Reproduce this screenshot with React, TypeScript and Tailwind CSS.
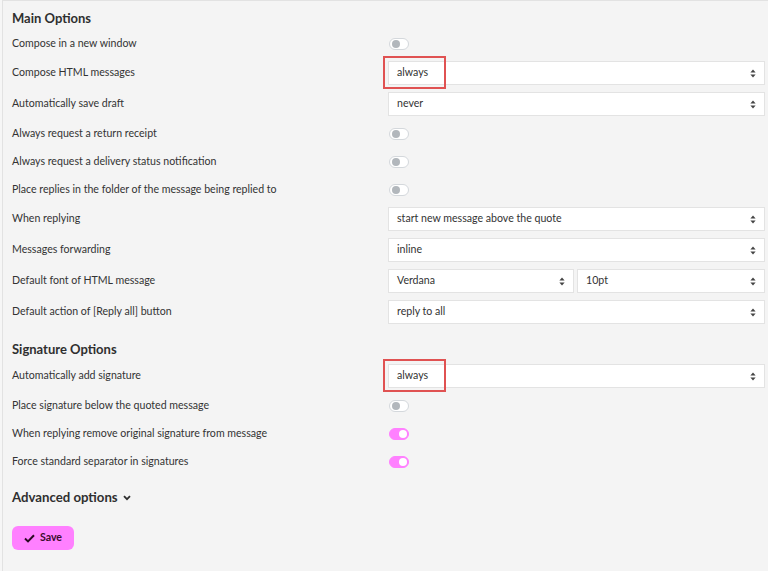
import { ReactNode } from "react";

type Row =
  | { kind: "toggle"; label: string; on?: boolean }
  | { kind: "select"; label: string; value: string; marked?: boolean }
  | { kind: "font"; label: string };

const mainRows: Row[] = [
  { kind: "toggle", label: "Compose in a new window" },
  { kind: "select", label: "Compose HTML messages", value: "always", marked: true },
  { kind: "select", label: "Automatically save draft", value: "never" },
  { kind: "toggle", label: "Always request a return receipt" },
  { kind: "toggle", label: "Always request a delivery status notification" },
  { kind: "toggle", label: "Place replies in the folder of the message being replied to" },
  { kind: "select", label: "When replying", value: "start new message above the quote" },
  { kind: "select", label: "Messages forwarding", value: "inline" },
  { kind: "font", label: "Default font of HTML message" },
  { kind: "select", label: "Default action of [Reply all] button", value: "reply to all" },
];

const signatureRows: Row[] = [
  { kind: "select", label: "Automatically add signature", value: "always", marked: true },
  { kind: "toggle", label: "Place signature below the quoted message" },
  { kind: "toggle", label: "When replying remove original signature from message", on: true },
  { kind: "toggle", label: "Force standard separator in signatures", on: true },
];

const Arrows = () => (
  <svg width="6" height="9" viewBox="0 0 6 9" className="shrink-0">
    <path d="M3 0.5 L5.6 3.6 H0.4 Z" fill="#444" />
    <path d="M3 8.5 L5.6 5.4 H0.4 Z" fill="#444" />
  </svg>
);

const Select = ({ value, className = "" }: { value: string; className?: string }) => (
  <div
    className={`flex h-6 items-center justify-between border border-[#e3e3e3] bg-white pl-[8px] pr-[8px] text-[10.6px] text-[#333] ${className}`}
  >
    <span>{value}</span>
    <Arrows />
  </div>
);

const Toggle = ({ on }: { on?: boolean }) => (
  <div
    className={`ml-px flex h-3 w-5 items-center rounded-full border px-[1.5px] ${
      on ? "justify-end border-[#ff80ff] bg-[#ff80ff]" : "justify-start border-[#d4d8dc] bg-white"
    }`}
  >
    <div className={`h-2 w-2 rounded-full ${on ? "bg-white" : "bg-[#b2b7bc]"}`} />
  </div>
);

const Mark = () => (
  <div className="pointer-events-none absolute -left-[5px] -top-[5px] h-[33px] w-[63px] border-2 border-[#e05252]" />
);

const OptionRow = ({ row }: { row: Row }) => {
  let control: ReactNode;
  if (row.kind === "toggle") control = <Toggle on={row.on} />;
  else if (row.kind === "select")
    control = (
      <div className="relative">
        <Select value={row.value} />
        {row.marked && <Mark />}
      </div>
    );
  else
    control = (
      <div className="flex gap-[3px]">
        <Select value="Verdana" className="w-[186px]" />
        <Select value="10pt" className="flex-1" />
      </div>
    );

  return (
    <div
      className={`flex items-center ${row.kind === "toggle" ? "h-[28px]" : "h-[31px] pb-px"}`}
    >
      <div className="w-[376px] text-[10.6px] text-[#333]">{row.label}</div>
      <div className="flex-1">{control}</div>
    </div>
  );
};

const Heading = ({ children }: { children: ReactNode }) => (
  <h2 className="flex h-[22px] items-center text-[13px] font-bold text-[#2f2f2f]">{children}</h2>
);

export default function App() {
  return (
    <div
      className="h-[571px] w-[768px] overflow-hidden bg-[#f6f6f6] pl-[2px]"
      style={{ fontFamily: 'Lato, "Liberation Sans", sans-serif' }}
    >
      <div className="h-full border-l border-t border-[#e2e2e2] bg-[#f4f4f4] pl-[9px] pr-[3px] pt-[7px]">
        <Heading>Main Options</Heading>
        {mainRows.map((r) => (
          <OptionRow key={r.label} row={r} />
        ))}
        <div className="mt-[11px]">
          <Heading>Signature Options</Heading>
        </div>
        {signatureRows.map((r) => (
          <OptionRow key={r.label} row={r} />
        ))}
        <button className="mt-[12px] flex h-[20px] items-center gap-[5px] text-[13.2px] font-bold leading-none text-[#2f2f2f]">
          Advanced options
          <svg width="8" height="6" viewBox="0 0 8 6">
            <path d="M1 1.2 L4 4.2 L7 1.2" fill="none" stroke="#2f2f2f" strokeWidth="1.8" />
          </svg>
        </button>
        <button className="mt-[18px] flex h-6 w-[62px] items-center justify-center gap-[5px] rounded-[6px] bg-[#ff80ff] text-[10.6px] font-bold text-[#3a0d2e]">
          <svg width="11" height="9" viewBox="0 0 11 9">
            <path d="M1 4.6 L4 7.4 L10 1.2" fill="none" stroke="#2a0a22" strokeWidth="2" />
          </svg>
          Save
        </button>
      </div>
    </div>
  );
}
